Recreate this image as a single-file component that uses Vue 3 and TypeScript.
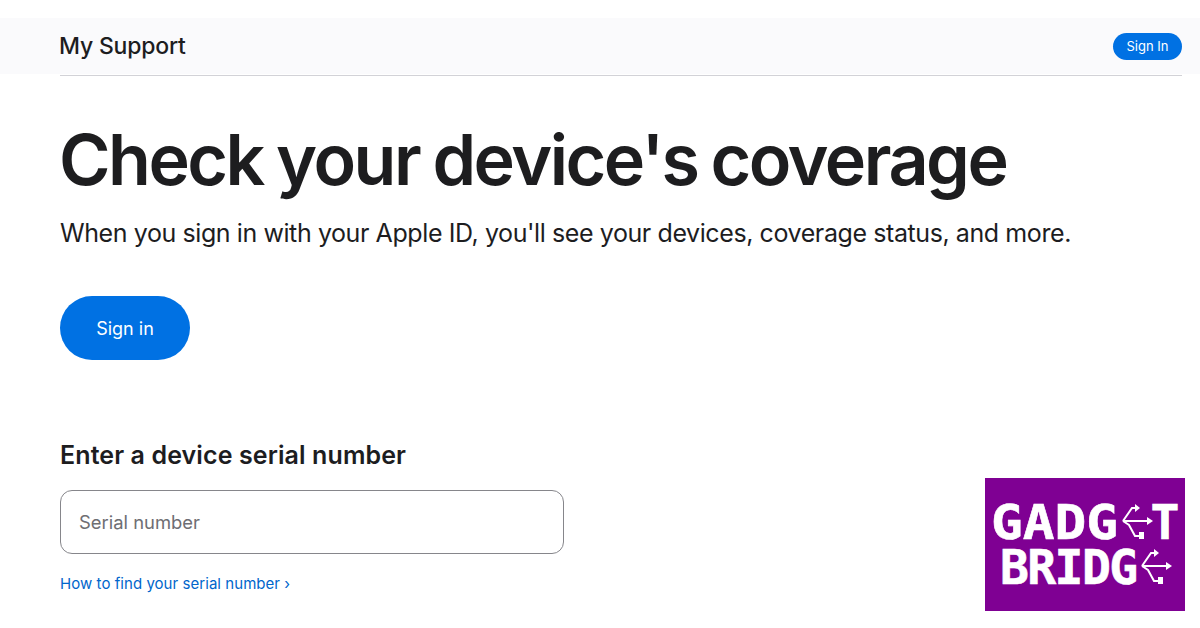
<script setup lang="ts">
const usbVariants: string[] = ['usb-a', 'usb-b']
</script>

<template>
  <div class="page">
    <header class="bar">
      <div class="bar-inner">
        <span class="brand">My Support</span>
        <button class="small-btn">Sign In</button>
      </div>
    </header>
    <main class="main">
      <h1 class="title">Check your device's coverage</h1>
      <p class="lead">When you sign in with your Apple ID, you'll see your devices, coverage status, and more.</p>
      <button class="big-btn">Sign in</button>
      <h2 class="sub">Enter a device serial number</h2>
      <div class="field">Serial number</div>
      <a class="link">How to find your serial number ›</a>
    </main>
    <div class="logo">
      <div class="logo-row row-one">
        <span class="word">GADG</span>
        <svg class="usb" :class="usbVariants[0]" viewBox="0 0 31 36">
          <path d="M1 17 L10 4 L14 4 M1 17 L27 17 M1 17 L7 21 L13 32 L18 32" fill="none" stroke="#fff" stroke-width="2" />
          <path d="M13 0 L18 4 L13 8 Z M17 28 L22 28 L22 35 L17 35 Z M25 13 L31 17 L25 21 Z" fill="#fff" />
        </svg>
        <span class="tail">T</span>
      </div>
      <div class="logo-row row-two">
        <span>BRIDG</span>
        <svg class="usb" :class="usbVariants[1]" viewBox="0 0 31 36">
          <path d="M1 17 L10 4 L14 4 M1 17 L27 17 M1 17 L7 21 L13 32 L18 32" fill="none" stroke="#fff" stroke-width="2" />
          <path d="M13 0 L18 4 L13 8 Z M17 28 L22 28 L22 35 L17 35 Z M25 13 L31 17 L25 21 Z" fill="#fff" />
        </svg>
      </div>
    </div>
  </div>
</template>

<style scoped>
.page {
  position: relative;
  width: 1200px;
  height: 628px;
  overflow: hidden;
  background: #fff;
  padding-top: 18px;
  box-sizing: border-box;
  font-family: Inter, "Liberation Sans", sans-serif;
  color: #1d1d1f;
}
.bar {
  background: #fafafc;
  height: 56px;
  padding: 0 18px 0 60px;
}
.bar-inner {
  height: 58px;
  box-sizing: border-box;
  border-bottom: 1px solid #d2d2d7;
  display: flex;
  align-items: center;
  justify-content: space-between;
}
.brand {
  font-size: 23px;
  font-weight: 500;
  letter-spacing: -0.2px;
  margin: 0 0 2px -1px;
}
.small-btn {
  width: 69px;
  height: 27px;
  border: 0;
  padding: 0 0 2px;
  border-radius: 14px;
  background: #0071e3;
  color: #fff;
  font: 400 13px Inter, sans-serif;
}
.main {
  padding: 48px 0 0 60px;
}
.title {
  margin: 0 0 0 -1px;
  font-size: 70px;
  line-height: 76px;
  font-weight: 600;
  letter-spacing: -2.5px;
  word-spacing: -2px;
}
.lead {
  margin: 17px 0 0;
  font-size: 25px;
  line-height: 36px;
  font-weight: 400;
  letter-spacing: -0.41px;
}
.big-btn {
  display: block;
  margin-top: 45px;
  width: 130px;
  height: 64px;
  border: 0;
  padding: 0;
  border-radius: 32px;
  background: #0071e3;
  color: #fff;
  font: 400 18px Inter, sans-serif;
}
.sub {
  margin: 77px 0 0;
  font-size: 25px;
  line-height: 36px;
  font-weight: 600;
  letter-spacing: 0.1px;
}
.field {
  margin-top: 17px;
  width: 504px;
  height: 64px;
  box-sizing: border-box;
  border: 1px solid #86868b;
  border-radius: 12px;
  padding-left: 18px;
  display: flex;
  align-items: center;
  font-size: 18.4px;
  color: #6e6e73;
}
.link {
  display: block;
  margin-top: 19px;
  font-size: 15px;
  line-height: 22px;
  letter-spacing: 0.05px;
  color: #0066cc;
}
.logo {
  position: absolute;
  left: 985px;
  top: 478px;
  width: 200px;
  height: 133px;
  background: #7f0093;
  color: #fff;
  font-family: "DejaVu Sans Mono", monospace;
  font-weight: 700;
  box-sizing: border-box;
  padding-top: 26px;
}
.logo-row {
  display: flex;
  align-items: center;
  height: 36px;
  font-size: 48px;
  line-height: 36px;
  -webkit-text-stroke: 0.6px #fff;
}
.row-one {
  padding-left: 6px;
}
.word {
  display: block;
  transform: scaleX(1.1);
  transform-origin: left center;
  margin-right: 15px;
}
.tail {
  display: block;
  margin-left: -2px;
}
.row-two {
  margin-top: 9px;
  padding-left: 15px;
  letter-spacing: -1.6px;
}
.usb {
  width: 31px;
  height: 36px;
  flex: none;
}
.row-two .usb {
  margin-left: 4px;
}
</style>

<style>
html, body {
  margin: 0;
  background: #fff;
}
</style>
